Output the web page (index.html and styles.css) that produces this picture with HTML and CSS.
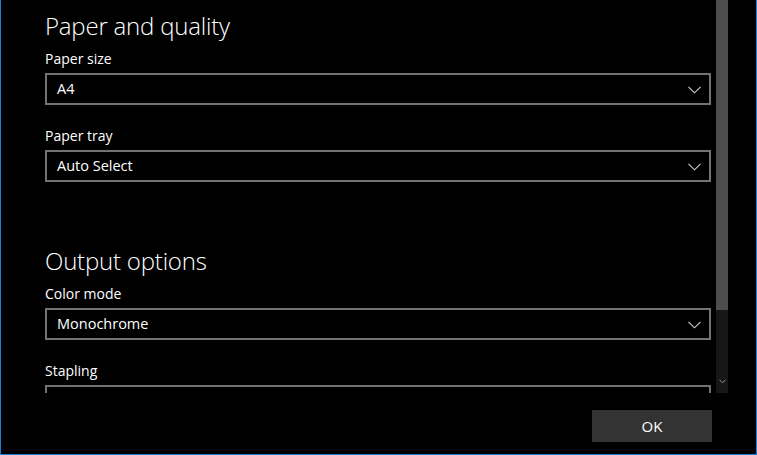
FILE: index.html
```html
<!DOCTYPE html>
<html>
<head>
<meta charset="utf-8">
<link rel="stylesheet" href="styles.css">
</head>
<body>
<div class="window">
  <div class="scroll-area">
    <div class="content">
      <h2 class="heading">Paper and quality</h2>
      <div class="field">
        <div class="label">Paper size</div>
        <div class="combo"><span class="value">A4</span><svg class="chev" width="13" height="8" viewBox="0 0 13 8"><path d="M0.5 0.8 L6.5 6.8 L12.5 0.8" fill="none" stroke="#cfcfcf" stroke-width="1.1"/></svg></div>
      </div>
      <div class="field">
        <div class="label">Paper tray</div>
        <div class="combo"><span class="value">Auto Select</span><svg class="chev" width="13" height="8" viewBox="0 0 13 8"><path d="M0.5 0.8 L6.5 6.8 L12.5 0.8" fill="none" stroke="#cfcfcf" stroke-width="1.1"/></svg></div>
      </div>
      <h2 class="heading section">Output options</h2>
      <div class="field">
        <div class="label">Color mode</div>
        <div class="combo"><span class="value">Monochrome</span><svg class="chev" width="13" height="8" viewBox="0 0 13 8"><path d="M0.5 0.8 L6.5 6.8 L12.5 0.8" fill="none" stroke="#cfcfcf" stroke-width="1.1"/></svg></div>
      </div>
      <div class="field">
        <div class="label">Stapling</div>
        <div class="combo"><span class="value"></span></div>
      </div>
    </div>
    <div class="scrollbar">
      <div class="thumb"></div>
      <div class="track"></div>
      <div class="arrow"><svg width="7" height="5" viewBox="0 0 7 5"><path d="M0.5 0.8 L3.5 3.8 L6.5 0.8" fill="none" stroke="#9a9a9a" stroke-width="1"/></svg></div>
    </div>
    <div class="gutter"></div>
  </div>
  <div class="footer">
    <button class="ok">OK</button>
  </div>
</div>
</body>
</html>
```

FILE: styles.css
```css
html, body {
  margin: 0;
  padding: 0;
  background: #000;
}

body {
  font-family: "Open Sans", "Noto Sans", "Liberation Sans", sans-serif;
  color: #fff;
}

.window {
  box-sizing: border-box;
  width: 757px;
  height: 455px;
  border-left: 1px solid #1b7fd6;
  border-right: 1px solid #1b7fd6;
  border-bottom: 1px solid #1b7fd6;
  background: #000;
  display: flex;
  flex-direction: column;
}

.scroll-area {
  height: 393px;
  display: flex;
  overflow: hidden;
  flex: none;
}

.content {
  width: 715px;
  box-sizing: border-box;
  padding: 10px 5px 0 44px;
  overflow: hidden;
}

.heading {
  margin: 0 0 7px 0;
  font-size: 24px;
  font-weight: 300;
  line-height: 32px;
  color: #fff;
  letter-spacing: -0.2px;
}

.heading.section {
  margin-top: 63px;
}

.field {
  margin-bottom: 21px;
}

.label {
  font-size: 14px;
  line-height: 20px;
  color: #fff;
  margin-bottom: 4px;
}

.combo {
  box-sizing: border-box;
  height: 32px;
  border: 2px solid #737373;
  display: flex;
  align-items: center;
  padding: 0 8px 0 10px;
}

.value {
  flex: 1;
  font-size: 14.5px;
  line-height: 20px;
  color: #fff;
}

.chev {
  display: block;
  margin-top: 1px;
}

.scrollbar {
  width: 12px;
  flex: none;
  display: flex;
  flex-direction: column;
  background: #171717;
}

.thumb {
  height: 310px;
  background: #4d4d4d;
}

.track {
  flex: 1;
}

.arrow {
  height: 12px;
  display: flex;
  justify-content: center;
  align-items: flex-start;
}

.arrow svg {
  display: block;
  margin-top: -2px;
}

.gutter {
  flex: 1;
}

.footer {
  flex: 1;
  display: flex;
  justify-content: flex-end;
  align-items: flex-start;
  padding: 17px 44px 0 0;
}

.ok {
  width: 120px;
  height: 32px;
  border: none;
  background: #333;
  color: #fff;
  font-family: "Open Sans", "Noto Sans", "Liberation Sans", sans-serif;
  font-size: 15px;
  padding: 0;
  margin: 0;
}
```
